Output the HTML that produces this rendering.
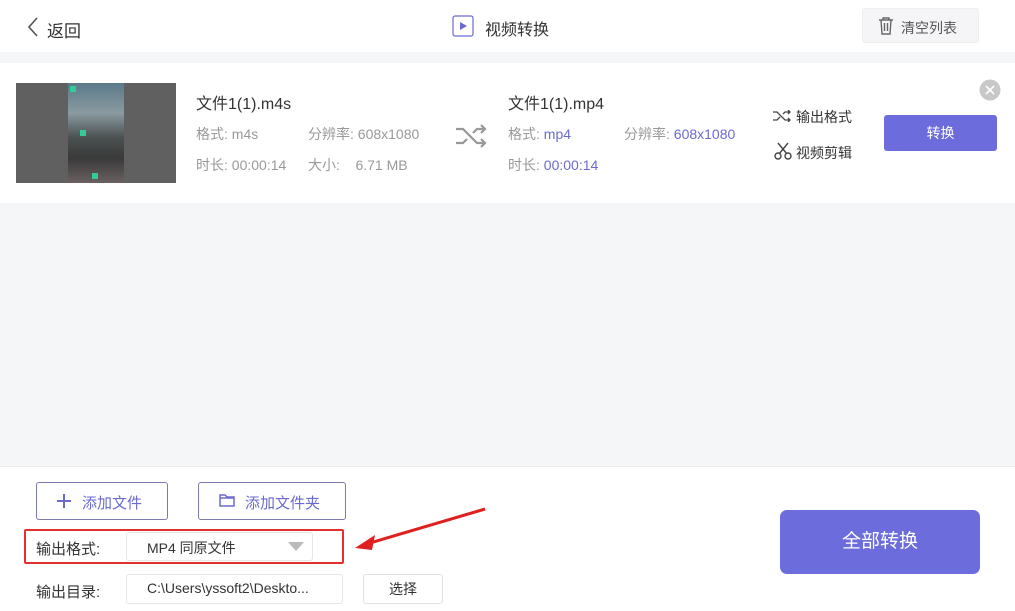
<!DOCTYPE html>
<html><head><meta charset="utf-8"><style>
*{margin:0;padding:0;box-sizing:border-box}
body{width:1015px;height:611px;overflow:hidden;background:#f5f6f8;font-family:"Liberation Sans","Noto Sans CJK SC",sans-serif;position:relative;color:#333}
.a{position:absolute;white-space:nowrap}
.g{color:#999;font-size:14px}
.b{color:#6a6ad0}
</style></head><body>
<div class="a" style="left:0;top:0;width:1015px;height:52px;background:#fff"></div>
<svg class="a" style="left:26px;top:16px" width="14" height="22"><path d="M11 2 L3 11 L11 20" stroke="#555" stroke-width="1.6" fill="none"/></svg>
<div class="a" style="left:47px;top:17px;font-size:17px;color:#333">返回</div>
<svg class="a" style="left:452px;top:15px" width="22" height="22"><rect x="1" y="1" width="20" height="20" rx="2" fill="#fff" stroke="#6a6ad0" stroke-width="1.2"/><path d="M8 7 L15 11 L8 15Z" fill="#6a6ad0"/></svg>
<div class="a" style="left:485px;top:16px;font-size:16px;color:#333">视频转换</div>
<div class="a" style="left:862px;top:8px;width:117px;height:35px;background:#f5f5f7;border:1px solid #eee;border-radius:3px"></div>
<svg class="a" style="left:878px;top:17px" width="16" height="18"><path d="M1 3h14M5 3V1h6v2M3 3l1 14h8l1-14M6.5 6v8M9.5 6v8" stroke="#666" stroke-width="1.4" fill="none"/></svg>
<div class="a" style="left:901px;top:18px;font-size:14px;color:#555">清空列表</div>

<div class="a" style="left:0;top:63px;width:1015px;height:140px;background:#fff"></div>
<div class="a" style="left:16px;top:83px;width:160px;height:100px;background:#606060"></div>
<div class="a" style="left:68px;top:83px;width:56px;height:100px;background:linear-gradient(180deg,#5a7a8a,#8a9aa0 30%,#4a5050 55%,#3a3a3a 75%,#6a6060)"></div>
<div class="a" style="left:70px;top:86px;width:6px;height:6px;background:#3c9"></div>
<div class="a" style="left:80px;top:130px;width:6px;height:6px;background:#3c9"></div>
<div class="a" style="left:92px;top:173px;width:6px;height:6px;background:#3c9"></div>
<div class="a" style="left:196px;top:90px;font-size:16px;color:#333">文件1(1).m4s</div>
<div class="a g" style="left:196px;top:124px">格式: m4s</div>
<div class="a g" style="left:308px;top:124px">分辨率: 608x1080</div>
<div class="a g" style="left:196px;top:155px">时长: 00:00:14</div>
<div class="a g" style="left:308px;top:155px">大小: &nbsp;&nbsp;&nbsp;6.71 MB</div>
<svg class="a" style="left:455px;top:124px" width="34" height="24"><path d="M1 5h7l14 14h8M1 19h7l4-4M18 9l4-4h8M26 1l4 4-4 4M26 15l4 4-4 4" stroke="#999" stroke-width="2.2" fill="none"/></svg>
<div class="a" style="left:508px;top:90px;font-size:16px;color:#333">文件1(1).mp4</div>
<div class="a g" style="left:508px;top:124px">格式: <span class="b">mp4</span></div>
<div class="a g" style="left:624px;top:124px">分辨率: <span class="b">608x1080</span></div>
<div class="a g" style="left:508px;top:155px">时长: <span class="b">00:00:14</span></div>
<svg class="a" style="left:773px;top:110px" width="18" height="12"><path d="M0 2h4l8 8h5M0 10h4l3-3M10 4l2-2h5M15 0l2 2-2 2M15 8l2 2-2 2" stroke="#444" stroke-width="1.3" fill="none"/></svg>
<div class="a" style="left:796px;top:107px;font-size:14px;color:#333">输出格式</div>
<svg class="a" style="left:774px;top:142px" width="18" height="18"><path d="M4 1l9 11M14 1L5 12" stroke="#444" stroke-width="1.4"/><circle cx="4" cy="14" r="3" stroke="#444" stroke-width="1.4" fill="none"/><circle cx="14" cy="14" r="3" stroke="#444" stroke-width="1.4" fill="none"/></svg>
<div class="a" style="left:796px;top:143px;font-size:14px;color:#333">视频剪辑</div>
<div class="a" style="left:884px;top:115px;width:113px;height:36px;background:#6c6cdc;border-radius:3px;color:#fff;font-size:14px;text-align:center;line-height:36px">转换</div>
<svg class="a" style="left:979px;top:79px" width="22" height="22"><circle cx="11" cy="11" r="10.5" fill="#c8c8c8"/><path d="M7 7l8 8M15 7l-8 8" stroke="#fff" stroke-width="1.6"/></svg>

<div class="a" style="left:0;top:466px;width:1015px;height:145px;background:#fff;border-top:1px solid #ececec"></div>
<div class="a" style="left:36px;top:482px;width:132px;height:38px;border:1px solid #7b7bb0;border-radius:3px"></div>
<svg class="a" style="left:56px;top:493px" width="16" height="16"><path d="M8 1v14M1 8h14" stroke="#6a6ad0" stroke-width="2"/></svg>
<div class="a" style="left:82px;top:492px;font-size:15px;color:#6a6ad0">添加文件</div>
<div class="a" style="left:198px;top:482px;width:148px;height:38px;border:1px solid #7b7bb0;border-radius:3px"></div>
<svg class="a" style="left:219px;top:493px" width="16" height="14"><path d="M1 2h5l2 2h7v9H1z M1 5h14" stroke="#6a6ad0" stroke-width="1.5" fill="none"/></svg>
<div class="a" style="left:245px;top:492px;font-size:15px;color:#6a6ad0">添加文件夹</div>
<div class="a" style="left:24px;top:529px;width:320px;height:35px;border:2px solid #e03030;border-radius:2px"></div>
<div class="a" style="left:36px;top:538px;font-size:15px;color:#333">输出格式:</div>
<div class="a" style="left:126px;top:532px;width:187px;height:29px;border:1px solid #e6e6e6;border-radius:3px;background:#fff"></div>
<div class="a" style="left:147px;top:538px;font-size:14px;color:#333">MP4 同原文件</div>
<svg class="a" style="left:288px;top:542px" width="16" height="10"><path d="M0 0h16L8 9z" fill="#bbb"/></svg>
<svg class="a" style="left:350px;top:505px" width="140" height="50"><polyline points="135,4 20,38" stroke="#e02020" stroke-width="3"/><path d="M5 43 L25 30 L22 45z" fill="#e02020"/></svg>
<div class="a" style="left:36px;top:581px;font-size:15px;color:#333">输出目录:</div>
<div class="a" style="left:126px;top:574px;width:217px;height:30px;border:1px solid #e6e6e6;border-radius:3px"></div>
<div class="a" style="left:147px;top:580px;font-size:14px;color:#333">C:\Users\yssoft2\Deskto...</div>
<div class="a" style="left:363px;top:574px;width:80px;height:30px;border:1px solid #e0e0e0;border-radius:3px;text-align:center;line-height:28px;font-size:14px;color:#333">选择</div>
<div class="a" style="left:780px;top:510px;width:200px;height:64px;background:#6c6cdc;border-radius:7px;color:#fff;font-size:19px;text-align:center;line-height:64px">全部转换</div>
</body></html>
